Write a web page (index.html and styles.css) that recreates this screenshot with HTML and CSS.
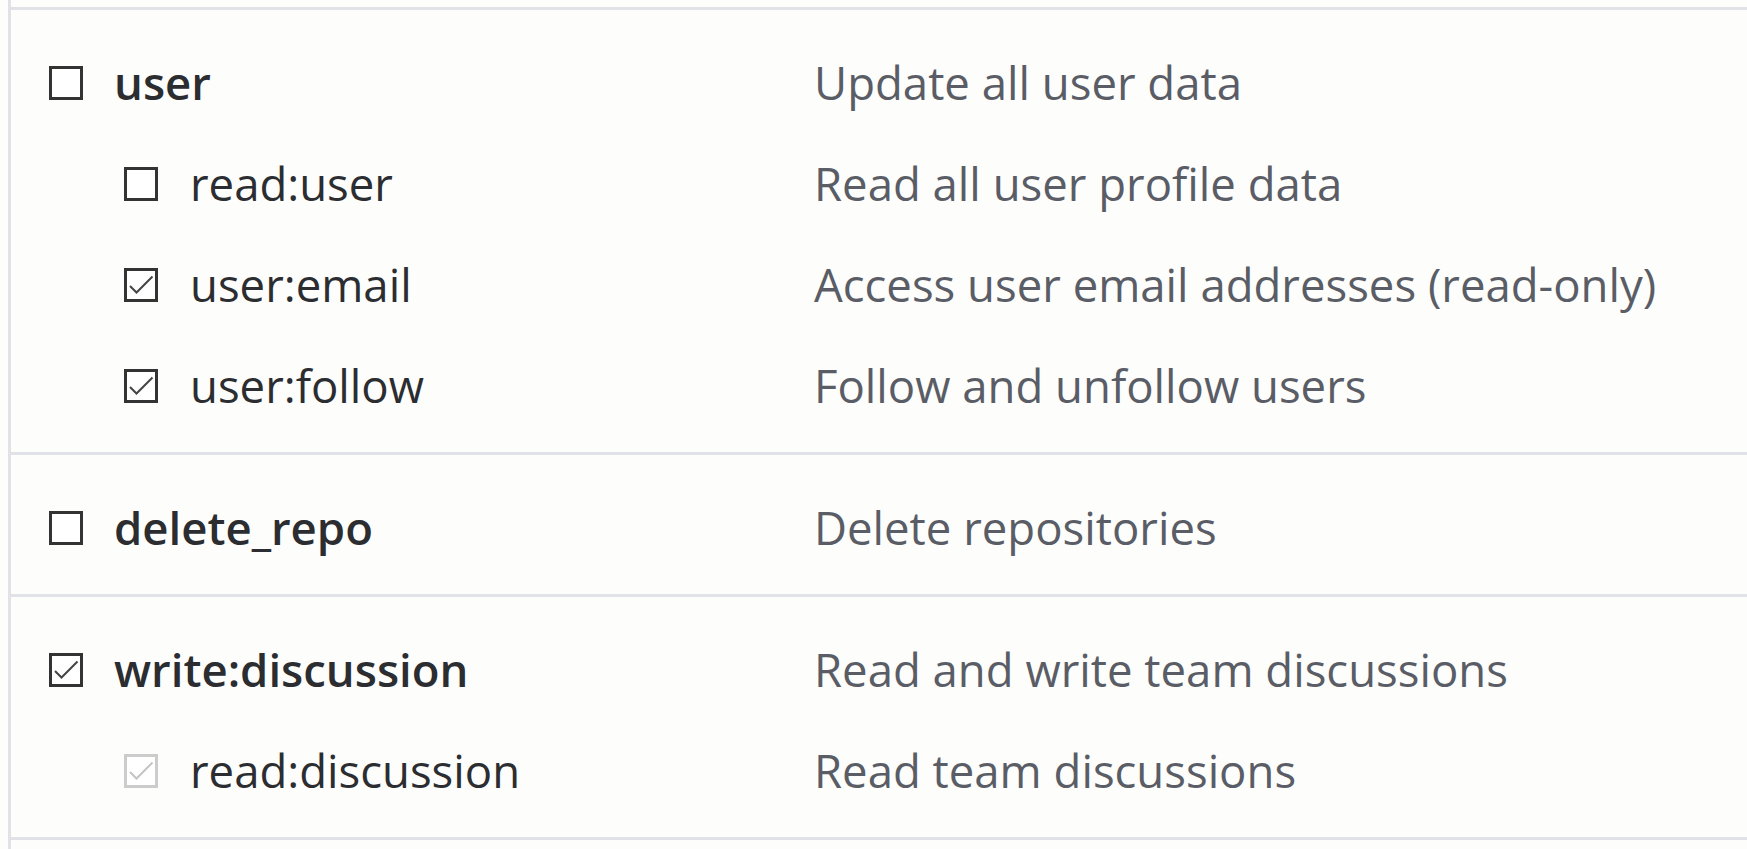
FILE: index.html
```html
<!DOCTYPE html>
<html lang="en">
<head>
<meta charset="utf-8">
<title>Scopes</title>
<link rel="stylesheet" href="styles.css">
</head>
<body>
<div class="list">
  <div class="group-prev"></div>

  <div class="group">
    <div class="row">
      <div class="scope parent">
        <svg class="cb" viewBox="0 0 34 34"><rect x="1.5" y="1.5" width="31" height="31" class="box"/></svg>
        <span class="name">user</span>
      </div>
      <span class="desc">Update all user data</span>
    </div>
    <div class="row">
      <div class="scope child">
        <svg class="cb" viewBox="0 0 34 34"><rect x="1.5" y="1.5" width="31" height="31" class="box"/></svg>
        <span class="name">read:user</span>
      </div>
      <span class="desc">Read all user profile data</span>
    </div>
    <div class="row">
      <div class="scope child">
        <svg class="cb" viewBox="0 0 34 34"><rect x="1.5" y="1.5" width="31" height="31" class="box"/><polyline points="6,18 12.5,24.5 28.5,8.5" class="tick"/></svg>
        <span class="name">user:email</span>
      </div>
      <span class="desc">Access user email addresses (read-only)</span>
    </div>
    <div class="row">
      <div class="scope child">
        <svg class="cb" viewBox="0 0 34 34"><rect x="1.5" y="1.5" width="31" height="31" class="box"/><polyline points="6,18 12.5,24.5 28.5,8.5" class="tick"/></svg>
        <span class="name">user:follow</span>
      </div>
      <span class="desc">Follow and unfollow users</span>
    </div>
  </div>

  <div class="group">
    <div class="row">
      <div class="scope parent">
        <svg class="cb" viewBox="0 0 34 34"><rect x="1.5" y="1.5" width="31" height="31" class="box"/></svg>
        <span class="name">delete_repo</span>
      </div>
      <span class="desc">Delete repositories</span>
    </div>
  </div>

  <div class="group">
    <div class="row">
      <div class="scope parent">
        <svg class="cb" viewBox="0 0 34 34"><rect x="1.5" y="1.5" width="31" height="31" class="box"/><polyline points="6,18 12.5,24.5 28.5,8.5" class="tick"/></svg>
        <span class="name">write:discussion</span>
      </div>
      <span class="desc">Read and write team discussions</span>
    </div>
    <div class="row">
      <div class="scope child disabled">
        <svg class="cb" viewBox="0 0 34 34"><rect x="1.5" y="1.5" width="31" height="31" class="box"/><polyline points="6,18 12.5,24.5 28.5,8.5" class="tick"/></svg>
        <span class="name">read:discussion</span>
      </div>
      <span class="desc">Read team discussions</span>
    </div>
  </div>
</div>
</body>
</html>
```

FILE: styles.css
```css
html, body {
  margin: 0;
  padding: 0;
  background: #fdfdfc;
  height: 849px;
  overflow: hidden;
}

.list {
  margin-left: 8px;
  border-left: 3px solid #e1e2e7;
  min-height: 849px;
  font-family: "Open Sans", "Noto Sans", sans-serif;
  font-size: 45.5px;
}

.group-prev {
  height: 7px;
  border-bottom: 3px solid #e1e2e7;
}

.group {
  padding: 19px 0;
  border-bottom: 3px solid #e1e2e7;
}

.row {
  display: grid;
  grid-template-columns: 803px 1fr;
  height: 101px;
  align-items: center;
}

.scope {
  display: flex;
  align-items: center;
  padding-left: 38px;
  gap: 31px;
}

.scope.child {
  padding-left: 113px;
  gap: 32px;
}

.cb {
  width: 34px;
  height: 34px;
  margin-top: 7px;
  flex: none;
  display: block;
}

.cb .box {
  fill: #ffffff;
  stroke: #333333;
  stroke-width: 3;
}

.cb .tick {
  fill: none;
  stroke: #444444;
  stroke-width: 2;
}

.disabled .cb .box {
  stroke: #cccccc;
}

.disabled .cb .tick {
  stroke: #c4c4c4;
}

.name {
  color: #2b2d31;
  line-height: 1;
  padding-top: 6px;
  white-space: nowrap;
}

.parent .name {
  font-weight: 600;
}

.desc {
  color: #5a5d66;
  line-height: 1;
  padding-top: 6px;
  white-space: nowrap;
}
```
